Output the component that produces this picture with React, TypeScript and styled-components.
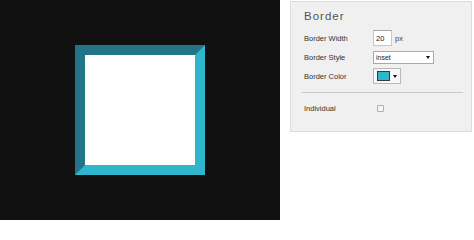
import React from 'react';
import styled, { createGlobalStyle } from 'styled-components';

const GlobalStyle = createGlobalStyle`
  html, body {
    margin: 0;
    padding: 0;
    background: #ffffff;
    font-family: "Liberation Sans", Arial, sans-serif;
  }
`;

const Layout = styled.div`
  display: flex;
  align-items: flex-start;
  width: 474px;
  height: 220px;
  overflow: hidden;
`;

const Stage = styled.div`
  display: flex;
  align-items: center;
  justify-content: center;
  flex: 0 0 280px;
  height: 220px;
  background: #111111;
`;

const Preview = styled.div<{ $width: number }>`
  box-sizing: border-box;
  width: 130px;
  height: 130px;
  background: #ffffff;
  border-style: solid;
  border-width: ${(p) => p.$width}px;
  border-color: #217586 #2fb5cc #2fb5cc #217586;
`;

const Panel = styled.section`
  box-sizing: border-box;
  width: 182px;
  margin: 1px 0 0 10px;
  padding: 7px 8px 12px 12px;
  background: #f0f0f0;
  border: 1px solid #dcdcdc;
`;

const PanelTitle = styled.h2`
  margin: 0 0 7px 1px;
  font-size: 11.5px;
  font-weight: normal;
  letter-spacing: 1px;
  line-height: 14px;
  color: #555555;
`;

const Row = styled.div`
  display: flex;
  align-items: center;
  height: 16px;
  margin-bottom: 3px;
`;

const Label = styled.span`
  flex: 0 0 69px;
  padding-left: 1px;
  font-size: 7.5px;
  color: #333333;
`;

const NumberInput = styled.input`
  box-sizing: border-box;
  width: 19px;
  height: 16px;
  margin: 0;
  padding: 0 2px;
  font-family: inherit;
  font-size: 7.5px;
  color: #222222;
  background: #ffffff;
  border: 1px solid #c8c8c8;
  border-top-color: #a8a8a8;
  outline: none;
`;

const Unit = styled.span`
  margin-left: 3px;
  font-size: 7.5px;
  color: #444444;
`;

const SelectBox = styled.div`
  box-sizing: border-box;
  display: flex;
  align-items: center;
  justify-content: space-between;
  width: 61px;
  height: 13px;
  padding: 0 3px 0 2px;
  font-size: 7px;
  color: #222222;
  background: #ffffff;
  border: 1px solid #a9a9a9;
`;

const Caret = styled.span`
  width: 0;
  height: 0;
  border-left: 2px solid transparent;
  border-right: 2px solid transparent;
  border-top: 3px solid #111111;
`;

const ColorButton = styled.div`
  box-sizing: border-box;
  display: flex;
  align-items: center;
  gap: 3px;
  width: 28px;
  height: 16px;
  padding: 0 3px;
  background: #f7f7f7;
  border: 1px solid #b9b9b9;
`;

const Swatch = styled.span<{ $color: string }>`
  box-sizing: border-box;
  width: 16px;
  height: 10px;
  background: ${(p) => p.$color};
  border: 1px solid #3a3a3a;
`;

const Divider = styled.hr`
  margin: 8px 0 7px -1px;
  border: 0;
  border-top: 1px solid #c9c9c9;
`;

const Checkbox = styled.span`
  box-sizing: border-box;
  width: 7px;
  height: 7px;
  margin-left: 4px;
  background: #f4f4f4;
  border: 1px solid #b0b0b0;
  border-radius: 1px;
`;

export default function App() {
  const borderWidth = 20;

  return (
    <>
      <GlobalStyle />
      <Layout>
        <Stage>
          <Preview $width={borderWidth / 2} />
        </Stage>
        <Panel>
          <PanelTitle>Border</PanelTitle>
          <Row>
            <Label>Border Width</Label>
            <NumberInput defaultValue={borderWidth} />
            <Unit>px</Unit>
          </Row>
          <Row>
            <Label>Border Style</Label>
            <SelectBox>
              inset
              <Caret />
            </SelectBox>
          </Row>
          <Row>
            <Label>Border Color</Label>
            <ColorButton>
              <Swatch $color="#2fb5cc" />
              <Caret />
            </ColorButton>
          </Row>
          <Divider />
          <Row>
            <Label>Individual</Label>
            <Checkbox />
          </Row>
        </Panel>
      </Layout>
    </>
  );
}
